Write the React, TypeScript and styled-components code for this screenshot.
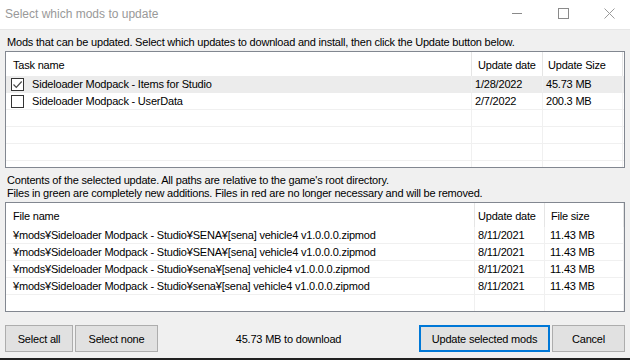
import styled, { createGlobalStyle } from "styled-components";

const GlobalStyle = createGlobalStyle`
  html, body {
    margin: 0;
    padding: 0;
    background: #f0f0f0;
  }
  body {
    font-family: "Liberation Sans", Arial, sans-serif;
    -webkit-font-smoothing: antialiased;
  }
`;

type Col = { width: number; headPad: number; cellPad: number };

const modCols: Col[] = [
  { width: 466, headPad: 7, cellPad: 5 },
  { width: 71, headPad: 6, cellPad: 3 },
  { width: 80, headPad: 5, cellPad: 3 },
];

const fileCols: Col[] = [
  { width: 469, headPad: 7, cellPad: 7 },
  { width: 70, headPad: 3, cellPad: 3 },
  { width: 79, headPad: 6, cellPad: 5 },
];

const mods = [
  { name: "Sideloader Modpack - Items for Studio", date: "1/28/2022", size: "45.73 MB", checked: true },
  { name: "Sideloader Modpack - UserData", date: "2/7/2022", size: "200.3 MB", checked: false },
];

const files = [
  "¥mods¥Sideloader Modpack - Studio¥SENA¥[sena] vehicle4 v1.0.0.0.zipmod",
  "¥mods¥Sideloader Modpack - Studio¥SENA¥[sena] vehicle4 v1.0.0.0.zipmod",
  "¥mods¥Sideloader Modpack - Studio¥sena¥[sena] vehicle4 v1.0.0.0.zipmod",
  "¥mods¥Sideloader Modpack - Studio¥sena¥[sena] vehicle4 v1.0.0.0.zipmod",
];

const template = (cols: Col[]) => cols.map((c) => `${c.width}px`).join(" ") + " 1fr";

export default function App() {
  return (
    <>
      <GlobalStyle />
      <Window>
        <TitleBar>
          <Title>Select which mods to update</Title>
          <Caption>
            <CaptionButton>
              <svg width="10" height="10" viewBox="0 0 10 10">
                <line x1="0" y1="5.5" x2="10" y2="5.5" stroke="#8a8a8a" strokeWidth="1" />
              </svg>
            </CaptionButton>
            <CaptionButton>
              <svg width="11" height="11" viewBox="0 0 11 11">
                <rect x="0.5" y="0.5" width="10" height="10" fill="none" stroke="#8a8a8a" strokeWidth="1" />
              </svg>
            </CaptionButton>
            <CaptionButton>
              <svg width="11" height="11" viewBox="0 0 11 11">
                <path d="M0.5 0.5 L10.5 10.5 M10.5 0.5 L0.5 10.5" stroke="#9a9a9a" strokeWidth="1" />
              </svg>
            </CaptionButton>
          </Caption>
        </TitleBar>

        <Label>
          Mods that can be updated. Select which updates to download and install, then click the Update button
          below.
        </Label>
        <ListBox height={117}>
          <HeadRow cols={template(modCols)}>
            <HeadCell pad={modCols[0].headPad}>Task name</HeadCell>
            <HeadCell pad={modCols[1].headPad}>Update date</HeadCell>
            <HeadCell pad={modCols[2].headPad}>Update Size</HeadCell>
            <span />
          </HeadRow>
          {mods.map((m, i) => (
            <Row key={i} cols={template(modCols)} selected={i === 0}>
              <Cell pad={modCols[0].cellPad}>
                <CheckBox>
                  {m.checked && (
                    <svg width="11" height="11" viewBox="0 0 11 11">
                      <path d="M1.5 5.5 L4.3 8.3 L9.7 2.5" fill="none" stroke="#4a4a4a" strokeWidth="1.2" />
                    </svg>
                  )}
                </CheckBox>
                {m.name}
              </Cell>
              <Cell pad={modCols[1].cellPad}>{m.date}</Cell>
              <Cell pad={modCols[2].cellPad}>{m.size}</Cell>
              <span />
            </Row>
          ))}
          {[0, 1, 2, 3].map((i) => (
            <Row key={"e" + i} cols={template(modCols)}>
              <Cell pad={0} />
              <Cell pad={0} />
              <Cell pad={0} />
              <span />
            </Row>
          ))}
        </ListBox>

        <Note>
          Contents of the selected update. All paths are relative to the game's root directory.
          <br />
          Files in green are completely new additions. Files in red are no longer necessary and will be removed.
        </Note>
        <ListBox height={110}>
          <HeadRow cols={template(fileCols)}>
            <HeadCell pad={fileCols[0].headPad}>File name</HeadCell>
            <HeadCell pad={fileCols[1].headPad}>Update date</HeadCell>
            <HeadCell pad={fileCols[2].headPad}>File size</HeadCell>
            <span />
          </HeadRow>
          {files.map((f, i) => (
            <Row key={i} cols={template(fileCols)}>
              <Cell pad={fileCols[0].cellPad}>{f}</Cell>
              <Cell pad={fileCols[1].cellPad}>8/11/2021</Cell>
              <Cell pad={fileCols[2].cellPad}>11.43 MB</Cell>
              <span />
            </Row>
          ))}
          <Row cols={template(fileCols)}>
            <Cell pad={0} />
            <Cell pad={0} />
            <Cell pad={0} />
            <span />
          </Row>
        </ListBox>

        <Footer>
          <Button width={68}>Select all</Button>
          <Button width={83}>Select none</Button>
          <Status>45.73 MB to download</Status>
          <Button width={131} primary>
            Update selected mods
          </Button>
          <Button width={73}>Cancel</Button>
        </Footer>
        <Spacer />
        <BottomEdge />
      </Window>
    </>
  );
}

const Window = styled.div`
  width: 630px;
  height: 360px;
  display: flex;
  flex-direction: column;
  background: #f0f0f0;
  overflow: hidden;
  font-size: 11px;
  letter-spacing: -0.2px;
  color: #000;
`;

const TitleBar = styled.div`
  height: 29px;
  flex: none;
  display: flex;
  align-items: center;
  background: #fff;
  border-bottom: 1px solid #e6e6e6;
`;

const Title = styled.div`
  flex: 1;
  padding-left: 5px;
  padding-bottom: 1px;
  font-size: 12px;
  letter-spacing: 0;
  color: #999;
`;

const Caption = styled.div`
  display: flex;
  height: 100%;
  margin-right: -2px;
`;

const CaptionButton = styled.div`
  width: 46px;
  height: 100%;
  display: flex;
  align-items: center;
  justify-content: center;
  padding-bottom: 3px;
  box-sizing: border-box;
`;

const Label = styled.div`
  margin: 6px 0 2px 7px;
  height: 13px;
  line-height: 13px;
  white-space: nowrap;
`;

const Note = styled.div`
  margin: 6px 0 2px 7px;
  height: 26px;
  line-height: 13px;
  white-space: nowrap;
`;

const ListBox = styled.div<{ height: number }>`
  flex: none;
  margin-left: 5px;
  width: 620px;
  height: ${(p) => p.height}px;
  box-sizing: border-box;
  border: 1px solid #828790;
  background: #fff;
  overflow: hidden;
`;

const HeadRow = styled.div<{ cols: string }>`
  display: grid;
  grid-template-columns: ${(p) => p.cols};
  height: 24px;
`;

const HeadCell = styled.div<{ pad: number }>`
  display: flex;
  align-items: center;
  padding: 2px 0 0 ${(p) => p.pad}px;
  border-right: 1px solid #e5e5e5;
  white-space: nowrap;
  overflow: hidden;
`;

const Row = styled.div<{ cols: string; selected?: boolean }>`
  display: grid;
  grid-template-columns: ${(p) => p.cols};
  height: 17px;
  box-sizing: border-box;
  border-bottom: 1px solid ${(p) => (p.selected ? "#ececec" : "#f0f0f0")};
  background: ${(p) => (p.selected ? "#ececec" : "#fff")};
`;

const Cell = styled.div<{ pad: number }>`
  display: flex;
  align-items: center;
  padding-left: ${(p) => p.pad}px;
  border-right: 1px solid #f0f0f0;
  white-space: nowrap;
  overflow: hidden;
`;

const CheckBox = styled.span`
  width: 13px;
  height: 13px;
  flex: none;
  box-sizing: border-box;
  border: 1px solid #333;
  background: #fff;
  margin-right: 8px;
  display: flex;
  align-items: center;
  justify-content: center;
`;

const Footer = styled.div`
  display: flex;
  align-items: center;
  gap: 2px;
  margin-top: 13px;
  padding: 0 5px;
`;

const Button = styled.button<{ width: number; primary?: boolean }>`
  width: ${(p) => p.width}px;
  height: 27px;
  padding: 0;
  box-sizing: border-box;
  font-family: "Liberation Sans", Arial, sans-serif;
  font-size: 11px;
  letter-spacing: -0.2px;
  color: #000;
  background: #e1e1e1;
  border: ${(p) => (p.primary ? "2px solid #0078d7" : "1px solid #adadad")};
  border-radius: 0;
`;

const Status = styled.div`
  flex: 1;
  text-align: center;
  white-space: nowrap;
`;

const Spacer = styled.div`
  flex: 1;
`;

const BottomEdge = styled.div`
  height: 2px;
  background: #202020;
`;
